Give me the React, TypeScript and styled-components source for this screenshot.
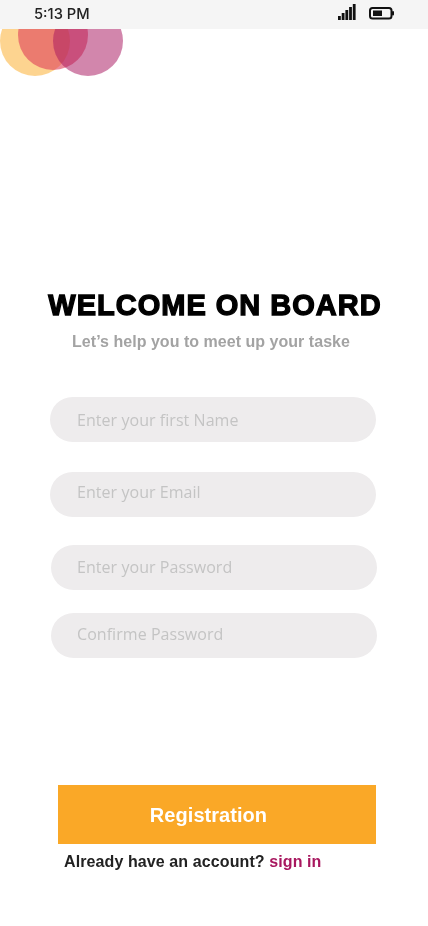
import React from "react";
import styled, { createGlobalStyle } from "styled-components";

const Global = createGlobalStyle`
  html, body { margin: 0; padding: 0; background: #fff; }
  #root { width: 428px; height: 926px; overflow: hidden; }
  * { box-sizing: border-box; }
`;

const Page = styled.div`
  width: 428px;
  height: 926px;
  display: flex;
  flex-direction: column;
  background: #fff;
  font-family: "Liberation Sans", Arial, sans-serif;
  will-change: transform;
`;

const StatusBar = styled.div`
  height: 29px;
  flex: none;
  background: #f5f5f5;
  display: flex;
  align-items: center;
  justify-content: space-between;
  padding: 0 34px 2px 34px;
`;

const Time = styled.span`
  font-family: Inter, Roboto, sans-serif;
  font-size: 14.7px;
  font-weight: 500;
  color: #222;
`;

const StatusIcons = styled.div`
  display: flex;
  align-items: center;
  gap: 13px;
`;

const SignalIcon = styled.svg`
  display: block;
  margin-bottom: 3px;
`;

const Blobs = styled.svg`
  display: block;
  flex: none;
`;

const Title = styled.h1`
  margin: 213px 0 0;
  height: 32px;
  padding-left: 2px;
  text-align: center;
  font-size: 29px;
  line-height: 32px;
  font-weight: 700;
  letter-spacing: 1px;
  color: #000;
  -webkit-text-stroke: 1.3px #000;
  white-space: nowrap;
`;

const Subtitle = styled.p`
  margin: 11px 0 0;
  height: 20px;
  text-align: center;
  font-size: 16px;
  line-height: 20px;
  font-weight: 700;
  letter-spacing: 0.03px;
  color: #a3a3a3;
  padding-right: 6px;
`;

const Form = styled.form`
  display: flex;
  flex-direction: column;
  margin-top: 45px;
`;

const Field = styled.input<{ $left: number; $top: number; $lift: number; $indent: number }>`
  display: block;
  width: 326px;
  height: 45px;
  margin: ${(p) => p.$top}px 0 0 ${(p) => p.$left}px;
  padding: 0 27px ${(p) => p.$lift}px ${(p) => p.$indent}px;
  border: none;
  outline: none;
  border-radius: 23px;
  background: #eeeced;
  font-family: "Open Sans", "Noto Sans", sans-serif;
  font-size: 16px;
  letter-spacing: 0.05px;
  color: #333;
  &::placeholder { color: #c4c4c4; opacity: 1; }
`;

const Submit = styled.button`
  display: block;
  width: 318px;
  height: 59px;
  margin: 127px 0 0 58px;
  border: none;
  background: #faa827;
  color: #fff;
  font-family: "Liberation Sans", Arial, sans-serif;
  font-size: 20px;
  font-weight: 700;
  letter-spacing: 0.05px;
  padding: 2px 17px 0 0;
`;

const Footer = styled.p`
  margin: 8px 0 0 64px;
  font-size: 16px;
  line-height: 20px;
  font-weight: 700;
  letter-spacing: 0.1px;
  color: #222;
`;

const SignIn = styled.a`
  color: #a8175f;
  text-decoration: none;
`;

const fields = [
  { text: "Enter your first Name", left: 50, top: 0, type: "text", lift: 0, indent: 27 },
  { text: "Enter your Email", left: 50, top: 30, type: "email", lift: 5, indent: 27 },
  { text: "Enter your Password", left: 51, top: 28, type: "password", lift: 1, indent: 26 },
  { text: "Confirme Password", left: 51, top: 23, type: "password", lift: 4, indent: 26 },
];

export default function App() {
  return (
    <Page>
      <Global />
      <StatusBar>
        <Time>5:13 PM</Time>
        <StatusIcons>
          <SignalIcon width="18" height="16" viewBox="0 0 18 16" fill="#111">
            <rect x="0" y="12" width="2.8" height="4" />
            <rect x="3.7" y="9" width="2.8" height="7" />
            <rect x="7.4" y="6" width="2.8" height="10" />
            <rect x="11.1" y="3" width="2.8" height="13" />
            <rect x="14.8" y="0" width="2.8" height="16" />
          </SignalIcon>
          <svg width="25" height="13" viewBox="0 0 25 13">
            <rect x="1" y="1" width="21.5" height="10.5" rx="2.5" fill="none" stroke="#111" strokeWidth="2" />
            <rect x="4" y="3.5" width="9" height="5.5" fill="#111" />
            <rect x="23" y="4" width="2" height="4.5" rx="1" fill="#111" />
          </svg>
        </StatusIcons>
      </StatusBar>
      <Blobs width="428" height="47" viewBox="0 29 428 47">
        <circle cx="35" cy="41" r="35" fill="#fbb034" fillOpacity="0.55" />
        <circle cx="53" cy="35" r="35" fill="#e0405a" fillOpacity="0.6" />
        <circle cx="88" cy="41" r="35" fill="#a8175f" fillOpacity="0.52" />
      </Blobs>
      <Title>WELCOME ON BOARD</Title>
      <Subtitle>Let’s help you to meet up your taske</Subtitle>
      <Form onSubmit={(e) => e.preventDefault()}>
        {fields.map((f) => (
          <Field
            key={f.text}
            type={f.type}
            placeholder={f.text}
            $left={f.left}
            $top={f.top}
            $lift={f.lift}
            $indent={f.indent}
          />
        ))}
        <Submit type="submit">Registration</Submit>
      </Form>
      <Footer>
        Already have an account? <SignIn href="#">sign in</SignIn>
      </Footer>
    </Page>
  );
}
